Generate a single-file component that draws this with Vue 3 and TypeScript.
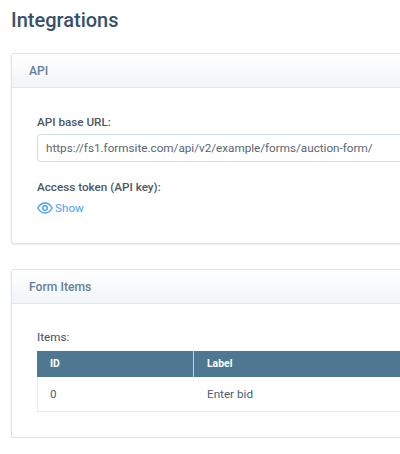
<script setup lang="ts">
const columns: string[] = ['ID', 'Label']
const rows: { id: number; label: string }[] = [{ id: 0, label: 'Enter bid' }]
</script>

<template>
  <div class="page">
    <h1 class="title">Integrations</h1>

    <section class="card api-card">
      <header class="card-head">API</header>
      <div class="card-body api-body">
        <label class="label">API base URL:</label>
        <div class="input">https://fs1.formsite.com/api/v2/example/forms/auction-form/</div>
        <label class="label token">Access token (API key):</label>
        <a class="show">
          <svg class="eye" viewBox="0 0 16 12" width="16" height="12" aria-hidden="true">
            <path d="M.8 6C2.700 2.700 5.100 1 8 1S13.300 2.700 15.200 6C13.300 9.300 10.900 11 8 11S2.700 9.300 .8 6Z" fill="none" stroke="currentColor" stroke-width="1.500" />
            <circle cx="8" cy="6" r="2.300" fill="none" stroke="currentColor" stroke-width="1.500" />
          </svg>
          <span>Show</span>
        </a>
      </div>
    </section>

    <section class="card items-card">
      <header class="card-head">Form Items</header>
      <div class="card-body items-body">
        <label class="label items-label">Items:</label>
        <div class="table">
          <div class="tr th">
            <div v-for="c in columns" :key="c" class="cell">{{ c }}</div>
          </div>
          <div v-for="r in rows" :key="r.id" class="tr td">
            <div class="cell">{{ r.id }}</div>
            <div class="cell">{{ r.label }}</div>
          </div>
        </div>
      </div>
    </section>
  </div>
</template>

<style>
html, body { margin: 0; background: #fff; overflow: hidden; }
</style>

<style scoped>
.page {
  width: 760px;
  padding: 0 0 0 11px;
  font-family: Roboto, "Liberation Sans", sans-serif;
  color: #3b4a5a;
}
.title {
  margin: 0;
  padding-top: 8px;
  height: 53px;
  box-sizing: border-box;
  font-size: 20px;
  line-height: 24px;
  font-weight: 500;
  color: #3a5068;
}
.card {
  border: 1px solid #d8e4ee;
  border-radius: 3px;
  box-shadow: 0 1px 2px rgba(90, 120, 150, 0.14);
  background: #fff;
}
.items-card { margin-top: 25px; }
.card-head {
  height: 34px;
  box-sizing: border-box;
  padding: 0 17px;
  font-size: 12.200px;
  line-height: 34px;
  font-weight: 500;
  color: #668299;
  border-bottom: 1px solid #e1e8ef;
  background: linear-gradient(#fff, #f1f5f8);
}
.card-body { padding-left: 25px; }
.api-body { height: 155px; box-sizing: border-box; padding-top: 26px; }
.items-body { height: 133px; box-sizing: border-box; padding-top: 25px; }
.label {
  display: block;
  font-size: 11.700px;
  line-height: 16px;
  font-weight: 500;
  color: #4a5866;
}
.items-label { font-weight: 400; color: #3f4d5b; }
.input {
  box-sizing: border-box;
  height: 28px;
  margin-top: 4px;
  padding: 0 8px;
  border: 1px solid #cfdbe6;
  border-radius: 3px;
  font-size: 11.700px;
  line-height: 26px;
  color: #5a656f;
}
.token { margin-top: 17px; }
.show {
  display: flex;
  align-items: center;
  gap: 2px;
  margin-top: 5px;
  height: 16px;
  font-size: 11.700px;
  color: #4ea1f5;
}
.eye { flex: none; }
.table {
  margin-top: 6px;
  border-bottom: 1px solid #e6ebf0;
  box-shadow: inset 1px 0 0 #e6ebf0;
}
.tr { display: grid; grid-template-columns: 157px 1fr; }
.th {
  height: 26px;
  background: #4e7891;
  color: #fff;
  font-size: 10.400px;
  font-weight: 700;
  line-height: 26px;
}
.th .cell:first-child { border-right: 1px solid #c4d2dc; }
.td {
  height: 34px;
  line-height: 34px;
  font-size: 11.700px;
  color: #4a6078;
}
.cell { padding-left: 13px; }
</style>
